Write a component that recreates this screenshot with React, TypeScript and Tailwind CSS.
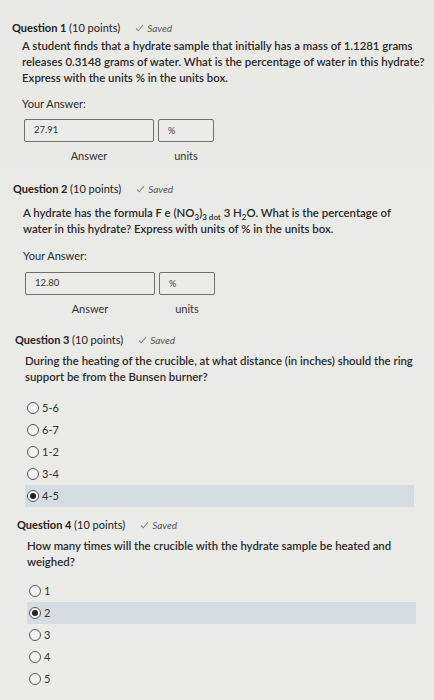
import React from 'react';

const font = { fontFamily: 'Lato, "Open Sans", sans-serif' };

const Check = () => (
  <svg width="9" height="8" viewBox="0 0 9 8" className="inline-block">
    <path d="M1 4.5 L3.3 6.8 L8 1.2" fill="none" stroke="#8a8a8a" strokeWidth="1.1" />
  </svg>
);

const Header: React.FC<{ n: number }> = ({ n }) => (
  <div className="flex items-center gap-[15px] text-[11px] leading-[14px] text-[#222]">
    <span className="font-bold">
      Question {n} <span className="font-normal">(10 points)</span>
    </span>
    <span className="flex items-center gap-[3px] italic text-[10px] text-[#555]">
      <Check /> Saved
    </span>
  </div>
);

const AnswerBoxes: React.FC<{ value: string; top: string }> = ({ value, top }) => (
  <div className={`ml-[12px] ${top}`}>
    <div className="flex gap-[4px]">
      <div className="w-[130px] h-[23px] border-[1.5px] border-[#6f6f6f] rounded-[2px] bg-[#ebebe8] px-[9px] flex items-center text-[9.5px] text-[#333]">
        {value}
      </div>
      <div className="w-[56px] h-[23px] border-[1.5px] border-[#6f6f6f] rounded-[2px] bg-[#ebebe8] px-[9px] flex items-center text-[9px] text-[#444]">
        %
      </div>
    </div>
    <div className="flex gap-[4px] mt-[7px] text-[11px] text-[#333] leading-[14px]">
      <div className="w-[130px] text-center">Answer</div>
      <div className="w-[56px] text-center">units</div>
    </div>
  </div>
);

const Radio: React.FC<{ checked?: boolean }> = ({ checked }) => (
  <span className="w-[12px] h-[12px] rounded-full border border-[#555] bg-[#f3f3f1] flex items-center justify-center shrink-0">
    {checked && <span className="w-[6px] h-[6px] rounded-full bg-[#222]" />}
  </span>
);

const Options: React.FC<{ items: string[]; selected: number; top: string }> = ({ items, selected, top }) => (
  <div className={`${top} flex flex-col`}>
    {items.map((it, i) => (
      <div
        key={it}
        className={`h-[22px] flex items-center gap-[3px] pl-[2px] text-[11px] text-[#333] ${i === selected ? 'bg-[#d5dde2]' : ''}`}
      >
        <Radio checked={i === selected} />
        {it}
      </div>
    ))}
  </div>
);

const Sub: React.FC<{ children: React.ReactNode }> = ({ children }) => (
  <span className="inline-block text-[8px] leading-[8px] align-[-3px]">{children}</span>
);

const body = 'ml-[10px] text-[11.4px] leading-[16px] text-[#2a2a2a] font-semibold';

export default function App() {
  return (
    <div style={font} className="w-[434px] h-[700px] overflow-hidden bg-gradient-to-b from-[#e9e9e6] to-[#ebebe8] pl-[12px] pt-[21px]">
      <section>
        <Header n={1} />
        <div className={`${body} mt-[3px] w-[410px]`}>
          A student finds that a hydrate sample that initially has a mass of 1.1281 grams releases 0.3148 grams of water. What is the percentage of water in this hydrate? Express with the units % in the units box.
        </div>
        <div className="ml-[10px] mt-[11px] text-[11px] leading-[14px] text-[#2a2a2a]">Your Answer:</div>
        <AnswerBoxes value="27.91" top="mt-[8px]" />
      </section>

      <section className="ml-[1px] mt-[19px]">
        <Header n={2} />
        <div className={`${body} mt-[9px] w-[372px]`}>
          A hydrate has the formula F e (NO<Sub>3</Sub>)<Sub>3 dot</Sub> 3 H<Sub>2</Sub>O. What is the percentage of water in this hydrate? Express with units of % in the units box.
        </div>
        <div className="ml-[10px] mt-[12px] text-[11px] leading-[14px] text-[#2a2a2a]">Your Answer:</div>
        <AnswerBoxes value="12.80" top="mt-[9px]" />
      </section>

      <section className="ml-[3px] mt-[17px]">
        <Header n={3} />
        <div className={`${body} mt-[6px] w-[398px]`}>
          During the heating of the crucible, at what distance (in inches) should the ring support be from the Bunsen burner?
        </div>
        <div className="ml-[10px] w-[389px]">
          <Options items={['5-6', '6-7', '1-2', '3-4', '4-5']} selected={4} top="mt-[12px]" />
        </div>
      </section>

      <section className="ml-[5px] mt-[11px]">
        <Header n={4} />
        <div className={`${body} mt-[6px] w-[385px]`}>
          How many times will the crucible with the hydrate sample be heated and weighed?
        </div>
        <div className="ml-[10px] w-[389px]">
          <Options items={['1', '2', '3', '4', '5']} selected={1} top="mt-[10px]" />
        </div>
      </section>
    </div>
  );
}
